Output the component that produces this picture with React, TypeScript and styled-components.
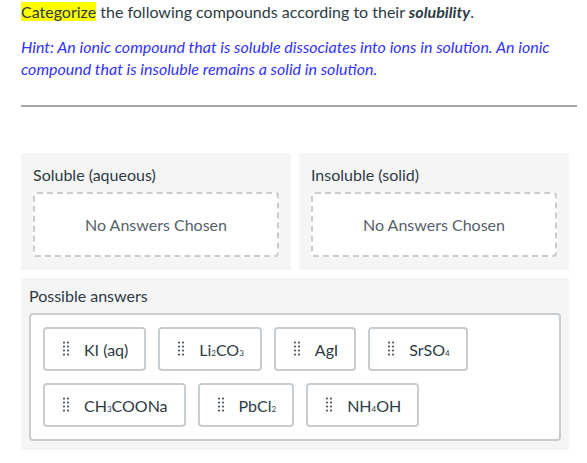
import React from 'react';
import styled, { createGlobalStyle } from 'styled-components';

const GlobalStyle = createGlobalStyle`
  body {
    margin: 0;
    background: #fff;
    font-family: Lato, "Liberation Sans", sans-serif;
    color: #2d3b45;
  }
`;

const Page = styled.div`
  padding: 1px 10px 0 21px;
`;

const Prompt = styled.p`
  margin: 0;
  font-size: 16px;
  line-height: 22px;
  color: #2d3b45;
`;

const Highlight = styled.span`
  background: #ffff00;
`;

const Hint = styled.p`
  margin: 13px 0 0;
  font-size: 16px;
  line-height: 22px;
  font-style: italic;
  color: #3232ff;
`;

const Rule = styled.hr`
  margin: 25px 0 0;
  border: none;
  border-top: 2px solid #a6a6a6;
`;

const Buckets = styled.div`
  display: grid;
  grid-template-columns: 1fr 1fr;
  gap: 8px;
  margin: 46px 8px 0 0;
`;

const Panel = styled.div<{ $pad: number }>`
  background: #f5f5f5;
  padding: ${(p) => p.$pad}px ${(p) => p.$pad}px ${(p) => p.$pad + 1}px;
`;

const PanelLabel = styled.div`
  font-size: 16px;
  line-height: 20px;
  color: #2d3b45;
  margin-bottom: 7px;
`;

const DropZone = styled.div`
  height: 65px;
  box-sizing: border-box;
  border: 2px dashed #c7cdd1;
  border-radius: 4px;
  background: #fff;
  display: flex;
  align-items: center;
  justify-content: center;
  font-size: 16px;
  color: #56616b;
`;

const AnswersPanel = styled(Panel)`
  margin: 8px 8px 0 0;
`;

const ChipTray = styled.div`
  border: 2px solid #c7cdd1;
  border-radius: 4px;
  background: #fff;
  padding: 12px;
  display: flex;
  flex-wrap: wrap;
  gap: 12px;
`;

const Chip = styled.div`
  height: 44px;
  box-sizing: border-box;
  border: 2px solid #c7cdd1;
  border-radius: 4px;
  background: #fff;
  display: flex;
  align-items: center;
  gap: 15px;
  padding: 0 16px 0 18px;
  font-size: 16px;
  color: #2d3b45;
`;

const Sub = styled.sub`
  font-size: 0.5em;
  vertical-align: baseline;
  line-height: 0;
`;

const Grip = () => (
  <svg width="6" height="16" viewBox="0 0 6 16">
    {[1.5, 5.5, 9.5, 13.5].map((y) =>
      [1, 5].map((x) => <circle key={`${x}-${y}`} cx={x} cy={y} r="1.1" fill="#4a555f" />)
    )}
  </svg>
);

const answers: React.ReactNode[] = [
  <>KI (aq)</>,
  <>Li<Sub>2</Sub>CO<Sub>3</Sub></>,
  <>AgI</>,
  <>SrSO<Sub>4</Sub></>,
  <>CH<Sub>3</Sub>COONa</>,
  <>PbCl<Sub>2</Sub></>,
  <>NH<Sub>4</Sub>OH</>,
];

export default function App() {
  return (
    <>
      <GlobalStyle />
      <Page>
        <Prompt>
          <Highlight>Categorize</Highlight> the following compounds according to their{' '}
          <b><i>solubility</i></b>.
        </Prompt>
        <Hint>
          Hint: An ionic compound that is soluble dissociates into ions in solution. An ionic
          compound that is insoluble remains a solid in solution.
        </Hint>
        <Rule />
        <Buckets>
          <Panel $pad={12}>
            <PanelLabel>Soluble (aqueous)</PanelLabel>
            <DropZone>No Answers Chosen</DropZone>
          </Panel>
          <Panel $pad={12}>
            <PanelLabel>Insoluble (solid)</PanelLabel>
            <DropZone>No Answers Chosen</DropZone>
          </Panel>
        </Buckets>
        <AnswersPanel $pad={8}>
          <PanelLabel>Possible answers</PanelLabel>
          <ChipTray>
            {answers.map((a, i) => (
              <Chip key={i}>
                <Grip />
                <span>{a}</span>
              </Chip>
            ))}
          </ChipTray>
        </AnswersPanel>
      </Page>
    </>
  );
}
